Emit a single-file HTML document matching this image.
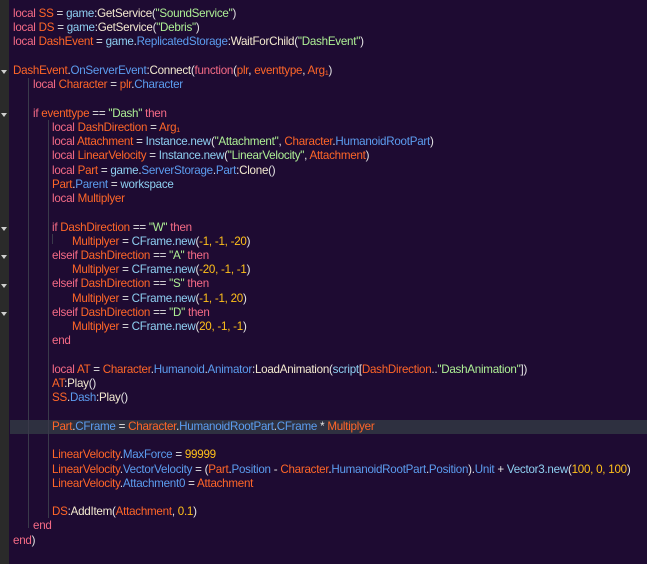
<!DOCTYPE html>
<html><head><meta charset="utf-8"><style>
html,body{margin:0;padding:0;}
body{width:647px;height:564px;background:#1e0b32;position:relative;overflow:hidden;font-family:"Liberation Sans",sans-serif;font-size:11.6px;letter-spacing:-0.25px;}
#gut{position:absolute;left:0;top:0;width:9px;height:564px;background:#2a2a2a;}
#hl{position:absolute;left:10px;top:420px;width:637px;height:14px;background:#2e3040;}
.g{position:absolute;width:1px;background:#3a3a4a;}
#code{position:absolute;left:13px;top:7px;line-height:14.24px;color:#dcdcdc;}
.l{height:14.24px;white-space:pre;}
.a{padding-left:20px}.b{padding-left:39px}.c{padding-left:59px}
.k{color:#f56b86}.v{color:#ff6628}.m{color:#8fd0f2}.p{color:#5c9df0}.s{color:#aef095}.n{color:#ffc01a}.f{color:#f4ead0}.o{color:#e4e4e4}
.ar{position:absolute;left:1px;width:0;height:0;border-left:3px solid transparent;border-right:3px solid transparent;border-top:4px solid #cfcfcf;}
</style></head><body>
<div id="gut"></div>
<div id="hl"></div>
<div class="g" style="left:28px;top:78px;height:450px"></div>
<div class="g" style="left:48px;top:120px;height:398px"></div>
<div class="g" style="left:52px;top:234px;height:10px"></div>
<div class="ar" style="top:70px"></div>
<div class="ar" style="top:113px"></div>
<div class="ar" style="top:227px"></div>
<div class="ar" style="top:255px"></div>
<div class="ar" style="top:284px"></div>
<div class="ar" style="top:312px"></div>
<div id="code"><div class="l"><span class="k">local</span> <span class="v">SS</span> <span class="o">=</span> <span class="m">game</span><span class="o">:</span><span class="f">GetService</span><span class="o">(</span><span class="s">"SoundService"</span><span class="o">)</span></div><div class="l"><span class="k">local</span> <span class="v">DS</span> <span class="o">=</span> <span class="m">game</span><span class="o">:</span><span class="f">GetService</span><span class="o">(</span><span class="s">"Debris"</span><span class="o">)</span></div><div class="l"><span class="k">local</span> <span class="v">DashEvent</span> <span class="o">=</span> <span class="m">game</span><span class="o">.</span><span class="p">ReplicatedStorage</span><span class="o">:</span><span class="f">WaitForChild</span><span class="o">(</span><span class="s">"DashEvent"</span><span class="o">)</span></div><div class="l"> </div><div class="l"><span class="v">DashEvent</span><span class="o">.</span><span class="p">OnServerEvent</span><span class="o">:</span><span class="f">Connect</span><span class="o">(</span><span class="k">function</span><span class="o">(</span><span class="v">plr</span><span class="o">, </span><span class="v">eventtype</span><span class="o">, </span><span class="v">Arg₁</span><span class="o">)</span></div><div class="l a"><span class="k">local</span> <span class="v">Character</span> <span class="o">=</span> <span class="v">plr</span><span class="o">.</span><span class="p">Character</span></div><div class="l"> </div><div class="l a"><span class="k">if</span> <span class="v">eventtype</span> <span class="o">==</span> <span class="s">"Dash"</span> <span class="k">then</span></div><div class="l b"><span class="k">local</span> <span class="v">DashDirection</span> <span class="o">=</span> <span class="v">Arg₁</span></div><div class="l b"><span class="k">local</span> <span class="v">Attachment</span> <span class="o">=</span> <span class="m">Instance.new</span><span class="o">(</span><span class="s">"Attachment"</span><span class="o">, </span><span class="v">Character</span><span class="o">.</span><span class="p">HumanoidRootPart</span><span class="o">)</span></div><div class="l b"><span class="k">local</span> <span class="v">LinearVelocity</span> <span class="o">=</span> <span class="m">Instance.new</span><span class="o">(</span><span class="s">"LinearVelocity"</span><span class="o">, </span><span class="v">Attachment</span><span class="o">)</span></div><div class="l b"><span class="k">local</span> <span class="v">Part</span> <span class="o">=</span> <span class="m">game</span><span class="o">.</span><span class="p">ServerStorage</span><span class="o">.</span><span class="p">Part</span><span class="o">:</span><span class="f">Clone</span><span class="o">()</span></div><div class="l b"><span class="v">Part</span><span class="o">.</span><span class="p">Parent</span> <span class="o">=</span> <span class="m">workspace</span></div><div class="l b"><span class="k">local</span> <span class="v">Multiplyer</span></div><div class="l"> </div><div class="l b"><span class="k">if</span> <span class="v">DashDirection</span> <span class="o">==</span> <span class="s">"W"</span> <span class="k">then</span></div><div class="l c"><span class="v">Multiplyer</span> <span class="o">=</span> <span class="m">CFrame.new</span><span class="o">(</span><span class="n">-1, -1, -20</span><span class="o">)</span></div><div class="l b"><span class="k">elseif</span> <span class="v">DashDirection</span> <span class="o">==</span> <span class="s">"A"</span> <span class="k">then</span></div><div class="l c"><span class="v">Multiplyer</span> <span class="o">=</span> <span class="m">CFrame.new</span><span class="o">(</span><span class="n">-20, -1, -1</span><span class="o">)</span></div><div class="l b"><span class="k">elseif</span> <span class="v">DashDirection</span> <span class="o">==</span> <span class="s">"S"</span> <span class="k">then</span></div><div class="l c"><span class="v">Multiplyer</span> <span class="o">=</span> <span class="m">CFrame.new</span><span class="o">(</span><span class="n">-1, -1, 20</span><span class="o">)</span></div><div class="l b"><span class="k">elseif</span> <span class="v">DashDirection</span> <span class="o">==</span> <span class="s">"D"</span> <span class="k">then</span></div><div class="l c"><span class="v">Multiplyer</span> <span class="o">=</span> <span class="m">CFrame.new</span><span class="o">(</span><span class="n">20, -1, -1</span><span class="o">)</span></div><div class="l b"><span class="k">end</span></div><div class="l"> </div><div class="l b"><span class="k">local</span> <span class="v">AT</span> <span class="o">=</span> <span class="v">Character</span><span class="o">.</span><span class="p">Humanoid</span><span class="o">.</span><span class="p">Animator</span><span class="o">:</span><span class="f">LoadAnimation</span><span class="o">(</span><span class="m">script</span><span class="o">[</span><span class="v">DashDirection</span><span class="o">..</span><span class="s">"DashAnimation"</span><span class="o">])</span></div><div class="l b"><span class="v">AT</span><span class="o">:</span><span class="f">Play</span><span class="o">()</span></div><div class="l b"><span class="v">SS</span><span class="o">.</span><span class="p">Dash</span><span class="o">:</span><span class="f">Play</span><span class="o">()</span></div><div class="l"> </div><div class="l b"><span class="v">Part</span><span class="o">.</span><span class="p">CFrame</span> <span class="o">=</span> <span class="v">Character</span><span class="o">.</span><span class="p">HumanoidRootPart</span><span class="o">.</span><span class="p">CFrame</span> <span class="o">*</span> <span class="v">Multiplyer</span></div><div class="l"> </div><div class="l b"><span class="v">LinearVelocity</span><span class="o">.</span><span class="p">MaxForce</span> <span class="o">=</span> <span class="n">99999</span></div><div class="l b"><span class="v">LinearVelocity</span><span class="o">.</span><span class="p">VectorVelocity</span> <span class="o">= (</span><span class="v">Part</span><span class="o">.</span><span class="p">Position</span> <span class="o">-</span> <span class="v">Character</span><span class="o">.</span><span class="p">HumanoidRootPart</span><span class="o">.</span><span class="p">Position</span><span class="o">).</span><span class="p">Unit</span> <span class="o">+</span> <span class="m">Vector3.new</span><span class="o">(</span><span class="n">100, 0, 100</span><span class="o">)</span></div><div class="l b"><span class="v">LinearVelocity</span><span class="o">.</span><span class="p">Attachment0</span> <span class="o">=</span> <span class="v">Attachment</span></div><div class="l"> </div><div class="l b"><span class="v">DS</span><span class="o">:</span><span class="f">AddItem</span><span class="o">(</span><span class="v">Attachment</span><span class="o">, </span><span class="n">0.1</span><span class="o">)</span></div><div class="l a"><span class="k">end</span></div><div class="l"><span class="k">end</span><span class="o">)</span></div></div>
</body></html>
